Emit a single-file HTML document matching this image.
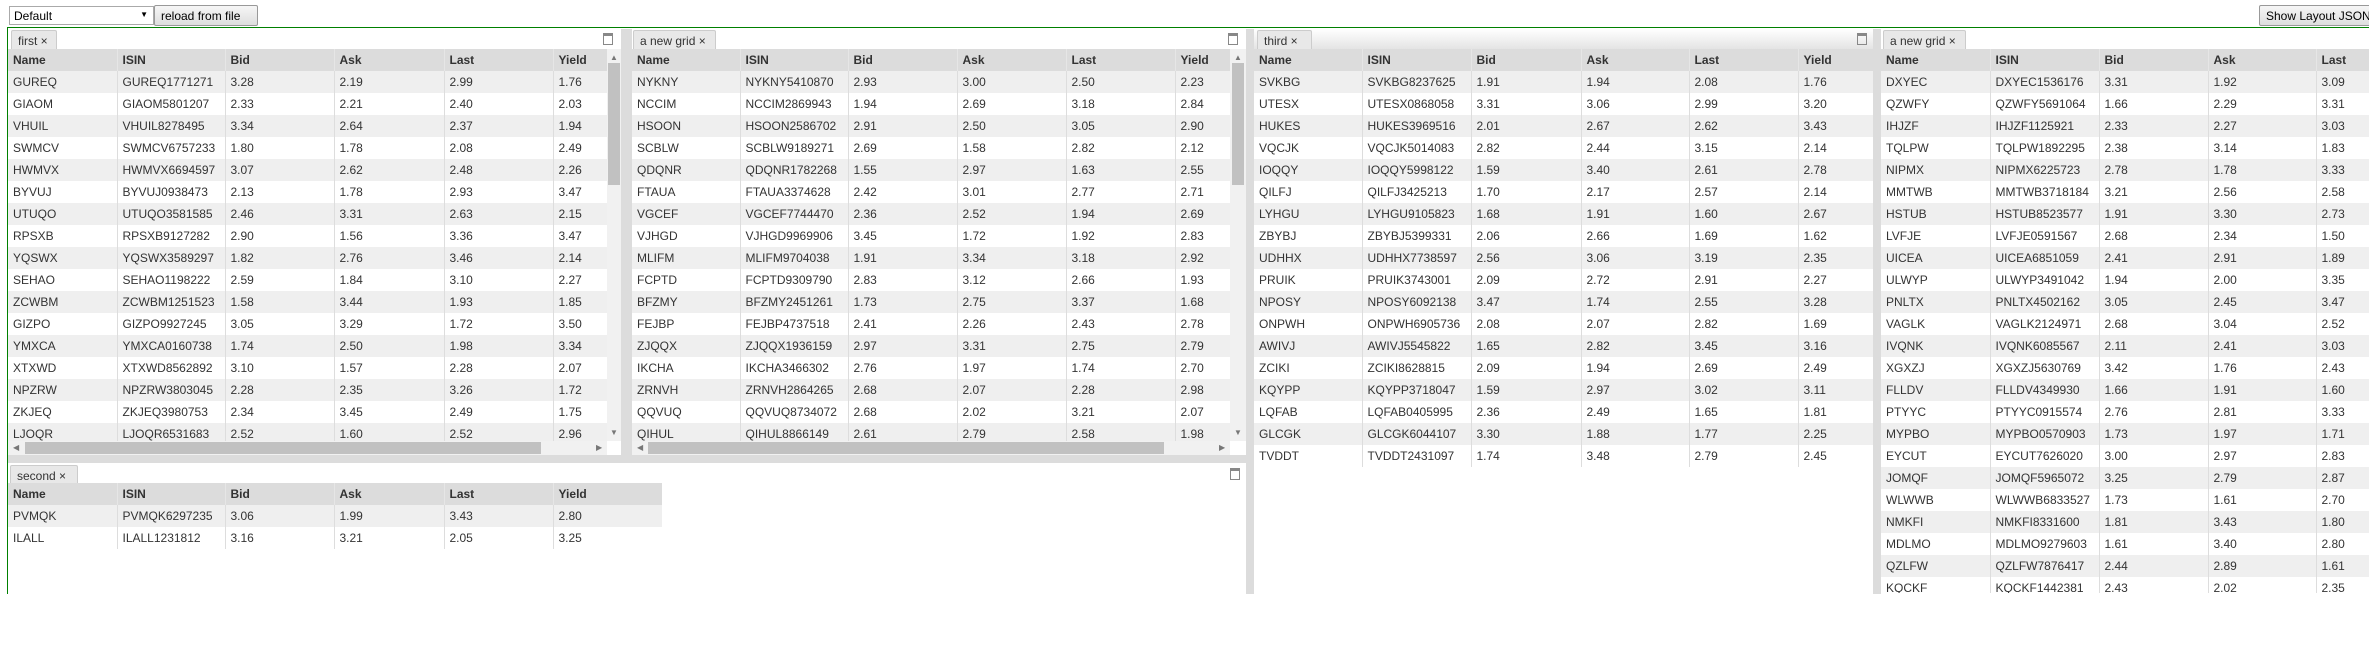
<!DOCTYPE html>
<html><head><meta charset="utf-8"><style>
*{box-sizing:border-box}
body{margin:0;width:2369px;height:648px;background:#fff;font:12px "Liberation Sans",Arial,sans-serif;color:#333;position:relative;overflow:hidden}
.abs{position:absolute}
.sel{left:9px;top:6px;width:145px;height:19px;border:1px solid #aaa;background:#fff;padding:2px 4px;font-size:12px;color:#000}
.sel:after{content:"\25BC";position:absolute;right:5px;top:3px;font-size:8px}
.btn{top:5px;height:21px;border:1px solid #999;background:linear-gradient(#f6f6f6,#dedede);padding:3px 6px;font-size:12px;color:#000;border-radius:2px;white-space:nowrap}
.split{background:#dcdcdc}
.tab{height:20px;background:#e8e8e8;border:1px solid #ccc;border-bottom:none;border-radius:2px 2px 0 0;padding:3px 6px 0 6px;font-size:12px;color:#333;white-space:nowrap}
.max{width:10px;height:12px;border:1px solid #888;border-top:3px solid #888}
.vp{overflow:hidden;background:#fff}
table{border-collapse:collapse;table-layout:fixed;font:12px "Liberation Sans",Arial,sans-serif}
td,th{height:22px;padding:0 0 0 5px;border-right:1px solid #ddd;white-space:nowrap;overflow:hidden;text-align:left;color:#333}
th{background:#dcdcdc;font-weight:bold;border-right:1px solid #e6e6e6}
tbody tr:nth-child(odd){background:#efefef}
tbody tr:nth-child(even){background:#fff}
.trk{background:#f1f1f1}
.thm{background:#c1c1c1}
.arr{font-size:8px;color:#777}
</style></head><body>
<div class="abs sel">Default</div>
<div class="abs btn" style="left:154px;width:104px">reload from file</div>
<div class="abs btn" style="left:2259px;width:130px">Show Layout JSON</div>

<!-- container -->
<div class="abs" style="left:7px;top:27px;width:2362px;height:567px;border-top:1px solid #008000;border-left:1px solid #008000"></div>

<!-- splitters -->
<div class="abs split" style="left:621px;top:29px;width:11px;height:426px"></div>
<div class="abs split" style="left:8px;top:455px;width:1238px;height:8px"></div>
<div class="abs split" style="left:1246px;top:29px;width:8px;height:565px"></div>
<div class="abs split" style="left:1873px;top:29px;width:8px;height:565px"></div>

<!-- tab bars -->
<div class="abs" style="left:1254px;top:29px;width:619px;height:20px;background:linear-gradient(#fff,#e4e4e4)"></div>
<div class="abs tab" style="left:11px;top:30px;width:46px;height:19px">first ×</div>
<div class="abs max" style="left:603px;top:33px"></div>
<div class="abs tab" style="left:633px;top:30px;width:83px;height:19px">a new grid ×</div>
<div class="abs max" style="left:1228px;top:33px"></div>
<div class="abs tab" style="left:1257px;top:30px;width:55px;height:19px">third ×</div>
<div class="abs max" style="left:1857px;top:33px"></div>
<div class="abs tab" style="left:1883px;top:30px;width:83px;height:19px">a new grid ×</div>
<div class="abs tab" style="left:10px;top:465px;width:68px;height:18px">second ×</div>
<div class="abs max" style="left:1230px;top:468px"></div>

<!-- grid 1 -->
<div class="abs vp" style="left:8px;top:49px;width:599px;height:392px">
<table style="width:654px"><colgroup><col style="width:109px"><col style="width:108px"><col style="width:109px"><col style="width:110px"><col style="width:109px"><col style="width:109px"></colgroup>
<thead><tr><th>Name<th>ISIN<th>Bid<th>Ask<th>Last<th>Yield</tr></thead><tbody>
<tr><td>GUREQ<td>GUREQ1771271<td>3.28<td>2.19<td>2.99<td>1.76
<tr><td>GIAOM<td>GIAOM5801207<td>2.33<td>2.21<td>2.40<td>2.03
<tr><td>VHUIL<td>VHUIL8278495<td>3.34<td>2.64<td>2.37<td>1.94
<tr><td>SWMCV<td>SWMCV6757233<td>1.80<td>1.78<td>2.08<td>2.49
<tr><td>HWMVX<td>HWMVX6694597<td>3.07<td>2.62<td>2.48<td>2.26
<tr><td>BYVUJ<td>BYVUJ0938473<td>2.13<td>1.78<td>2.93<td>3.47
<tr><td>UTUQO<td>UTUQO3581585<td>2.46<td>3.31<td>2.63<td>2.15
<tr><td>RPSXB<td>RPSXB9127282<td>2.90<td>1.56<td>3.36<td>3.47
<tr><td>YQSWX<td>YQSWX3589297<td>1.82<td>2.76<td>3.46<td>2.14
<tr><td>SEHAO<td>SEHAO1198222<td>2.59<td>1.84<td>3.10<td>2.27
<tr><td>ZCWBM<td>ZCWBM1251523<td>1.58<td>3.44<td>1.93<td>1.85
<tr><td>GIZPO<td>GIZPO9927245<td>3.05<td>3.29<td>1.72<td>3.50
<tr><td>YMXCA<td>YMXCA0160738<td>1.74<td>2.50<td>1.98<td>3.34
<tr><td>XTXWD<td>XTXWD8562892<td>3.10<td>1.57<td>2.28<td>2.07
<tr><td>NPZRW<td>NPZRW3803045<td>2.28<td>2.35<td>3.26<td>1.72
<tr><td>ZKJEQ<td>ZKJEQ3980753<td>2.34<td>3.45<td>2.49<td>1.75
<tr><td>LJOQR<td>LJOQR6531683<td>2.52<td>1.60<td>2.52<td>2.96
</tbody></table></div>
<div class="abs trk" style="left:607px;top:49px;width:14px;height:392px"></div>
<div class="abs thm" style="left:608px;top:63px;width:12px;height:122px"></div>
<div class="abs arr" style="left:610px;top:53px">▲</div>
<div class="abs arr" style="left:610px;top:428px">▼</div>
<div class="abs trk" style="left:8px;top:441px;width:599px;height:14px"></div>
<div class="abs thm" style="left:25px;top:442px;width:516px;height:12px"></div>
<div class="abs arr" style="left:13px;top:443px">◀</div>
<div class="abs arr" style="left:596px;top:443px">▶</div>
<div class="abs" style="left:607px;top:441px;width:14px;height:14px;background:#fff"></div>

<!-- grid 2 -->
<div class="abs vp" style="left:632px;top:49px;width:598px;height:392px">
<table style="width:654px"><colgroup><col style="width:108px"><col style="width:108px"><col style="width:109px"><col style="width:109px"><col style="width:109px"><col style="width:111px"></colgroup>
<thead><tr><th>Name<th>ISIN<th>Bid<th>Ask<th>Last<th>Yield</tr></thead><tbody>
<tr><td>NYKNY<td>NYKNY5410870<td>2.93<td>3.00<td>2.50<td>2.23
<tr><td>NCCIM<td>NCCIM2869943<td>1.94<td>2.69<td>3.18<td>2.84
<tr><td>HSOON<td>HSOON2586702<td>2.91<td>2.50<td>3.05<td>2.90
<tr><td>SCBLW<td>SCBLW9189271<td>2.69<td>1.58<td>2.82<td>2.12
<tr><td>QDQNR<td>QDQNR1782268<td>1.55<td>2.97<td>1.63<td>2.55
<tr><td>FTAUA<td>FTAUA3374628<td>2.42<td>3.01<td>2.77<td>2.71
<tr><td>VGCEF<td>VGCEF7744470<td>2.36<td>2.52<td>1.94<td>2.69
<tr><td>VJHGD<td>VJHGD9969906<td>3.45<td>1.72<td>1.92<td>2.83
<tr><td>MLIFM<td>MLIFM9704038<td>1.91<td>3.34<td>3.18<td>2.92
<tr><td>FCPTD<td>FCPTD9309790<td>2.83<td>3.12<td>2.66<td>1.93
<tr><td>BFZMY<td>BFZMY2451261<td>1.73<td>2.75<td>3.37<td>1.68
<tr><td>FEJBP<td>FEJBP4737518<td>2.41<td>2.26<td>2.43<td>2.78
<tr><td>ZJQQX<td>ZJQQX1936159<td>2.97<td>3.31<td>2.75<td>2.79
<tr><td>IKCHA<td>IKCHA3466302<td>2.76<td>1.97<td>1.74<td>2.70
<tr><td>ZRNVH<td>ZRNVH2864265<td>2.68<td>2.07<td>2.28<td>2.98
<tr><td>QQVUQ<td>QQVUQ8734072<td>2.68<td>2.02<td>3.21<td>2.07
<tr><td>QIHUL<td>QIHUL8866149<td>2.61<td>2.79<td>2.58<td>1.98
</tbody></table></div>
<div class="abs trk" style="left:1230px;top:49px;width:16px;height:392px"></div>
<div class="abs thm" style="left:1232px;top:63px;width:12px;height:122px"></div>
<div class="abs arr" style="left:1234px;top:53px">▲</div>
<div class="abs arr" style="left:1234px;top:428px">▼</div>
<div class="abs trk" style="left:632px;top:441px;width:598px;height:14px"></div>
<div class="abs thm" style="left:648px;top:442px;width:516px;height:12px"></div>
<div class="abs arr" style="left:637px;top:443px">◀</div>
<div class="abs arr" style="left:1219px;top:443px">▶</div>
<div class="abs" style="left:1230px;top:441px;width:16px;height:14px;background:#fff"></div>

<!-- grid 3 -->
<div class="abs vp" style="left:1254px;top:49px;width:619px;height:544px">
<table style="width:619px"><colgroup><col style="width:108px"><col style="width:109px"><col style="width:110px"><col style="width:108px"><col style="width:109px"><col style="width:75px"></colgroup>
<thead><tr><th>Name<th>ISIN<th>Bid<th>Ask<th>Last<th>Yield</tr></thead><tbody>
<tr><td>SVKBG<td>SVKBG8237625<td>1.91<td>1.94<td>2.08<td>1.76
<tr><td>UTESX<td>UTESX0868058<td>3.31<td>3.06<td>2.99<td>3.20
<tr><td>HUKES<td>HUKES3969516<td>2.01<td>2.67<td>2.62<td>3.43
<tr><td>VQCJK<td>VQCJK5014083<td>2.82<td>2.44<td>3.15<td>2.14
<tr><td>IOQQY<td>IOQQY5998122<td>1.59<td>3.40<td>2.61<td>2.78
<tr><td>QILFJ<td>QILFJ3425213<td>1.70<td>2.17<td>2.57<td>2.14
<tr><td>LYHGU<td>LYHGU9105823<td>1.68<td>1.91<td>1.60<td>2.67
<tr><td>ZBYBJ<td>ZBYBJ5399331<td>2.06<td>2.66<td>1.69<td>1.62
<tr><td>UDHHX<td>UDHHX7738597<td>2.56<td>3.06<td>3.19<td>2.35
<tr><td>PRUIK<td>PRUIK3743001<td>2.09<td>2.72<td>2.91<td>2.27
<tr><td>NPOSY<td>NPOSY6092138<td>3.47<td>1.74<td>2.55<td>3.28
<tr><td>ONPWH<td>ONPWH6905736<td>2.08<td>2.07<td>2.82<td>1.69
<tr><td>AWIVJ<td>AWIVJ5545822<td>1.65<td>2.82<td>3.45<td>3.16
<tr><td>ZCIKI<td>ZCIKI8628815<td>2.09<td>1.94<td>2.69<td>2.49
<tr><td>KQYPP<td>KQYPP3718047<td>1.59<td>2.97<td>3.02<td>3.11
<tr><td>LQFAB<td>LQFAB0405995<td>2.36<td>2.49<td>1.65<td>1.81
<tr><td>GLCGK<td>GLCGK6044107<td>3.30<td>1.88<td>1.77<td>2.25
<tr><td>TVDDT<td>TVDDT2431097<td>1.74<td>3.48<td>2.79<td>2.45
</tbody></table></div>

<!-- grid 4 -->
<div class="abs vp" style="left:1881px;top:49px;width:488px;height:544px">
<table style="width:654px"><colgroup><col style="width:109px"><col style="width:109px"><col style="width:109px"><col style="width:108px"><col style="width:109px"><col style="width:110px"></colgroup>
<thead><tr><th>Name<th>ISIN<th>Bid<th>Ask<th>Last<th>Yield</tr></thead><tbody>
<tr><td>DXYEC<td>DXYEC1536176<td>3.31<td>1.92<td>3.09<td>
<tr><td>QZWFY<td>QZWFY5691064<td>1.66<td>2.29<td>3.31<td>
<tr><td>IHJZF<td>IHJZF1125921<td>2.33<td>2.27<td>3.03<td>
<tr><td>TQLPW<td>TQLPW1892295<td>2.38<td>3.14<td>1.83<td>
<tr><td>NIPMX<td>NIPMX6225723<td>2.78<td>1.78<td>3.33<td>
<tr><td>MMTWB<td>MMTWB3718184<td>3.21<td>2.56<td>2.58<td>
<tr><td>HSTUB<td>HSTUB8523577<td>1.91<td>3.30<td>2.73<td>
<tr><td>LVFJE<td>LVFJE0591567<td>2.68<td>2.34<td>1.50<td>
<tr><td>UICEA<td>UICEA6851059<td>2.41<td>2.91<td>1.89<td>
<tr><td>ULWYP<td>ULWYP3491042<td>1.94<td>2.00<td>3.35<td>
<tr><td>PNLTX<td>PNLTX4502162<td>3.05<td>2.45<td>3.47<td>
<tr><td>VAGLK<td>VAGLK2124971<td>2.68<td>3.04<td>2.52<td>
<tr><td>IVQNK<td>IVQNK6085567<td>2.11<td>2.41<td>3.03<td>
<tr><td>XGXZJ<td>XGXZJ5630769<td>3.42<td>1.76<td>2.43<td>
<tr><td>FLLDV<td>FLLDV4349930<td>1.66<td>1.91<td>1.60<td>
<tr><td>PTYYC<td>PTYYC0915574<td>2.76<td>2.81<td>3.33<td>
<tr><td>MYPBO<td>MYPBO0570903<td>1.73<td>1.97<td>1.71<td>
<tr><td>EYCUT<td>EYCUT7626020<td>3.00<td>2.97<td>2.83<td>
<tr><td>JOMQF<td>JOMQF5965072<td>3.25<td>2.79<td>2.87<td>
<tr><td>WLWWB<td>WLWWB6833527<td>1.73<td>1.61<td>2.70<td>
<tr><td>NMKFI<td>NMKFI8331600<td>1.81<td>3.43<td>1.80<td>
<tr><td>MDLMO<td>MDLMO9279603<td>1.61<td>3.40<td>2.80<td>
<tr><td>QZLFW<td>QZLFW7876417<td>2.44<td>2.89<td>1.61<td>
<tr><td>KQCKF<td>KQCKF1442381<td>2.43<td>2.02<td>2.35<td>
</tbody></table></div>

<!-- bottom grid -->
<div class="abs vp" style="left:8px;top:483px;width:654px;height:66px">
<table style="width:654px"><colgroup><col style="width:109px"><col style="width:108px"><col style="width:109px"><col style="width:110px"><col style="width:109px"><col style="width:109px"></colgroup>
<thead><tr><th>Name<th>ISIN<th>Bid<th>Ask<th>Last<th>Yield</tr></thead><tbody>
<tr><td>PVMQK<td>PVMQK6297235<td>3.06<td>1.99<td>3.43<td>2.80
<tr><td>ILALL<td>ILALL1231812<td>3.16<td>3.21<td>2.05<td>3.25
</tbody></table></div>
</body></html>
